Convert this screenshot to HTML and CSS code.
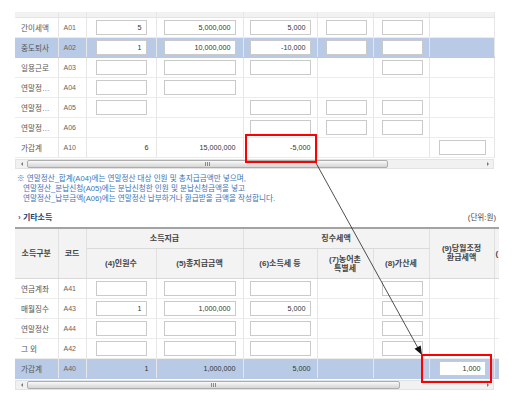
FILE: index.html
```html
<!DOCTYPE html>
<html lang="ko">
<head>
<meta charset="utf-8">
<link rel="stylesheet" href="styles.css">
</head>
<body>
<div class="page">
  <div class="grid top">
    <table>
      <colgroup><col class="w1"><col class="w2"><col class="w3"><col class="w4"><col class="w5"><col class="w6"><col class="w7"><col class="w8"></colgroup>
      <tr class="band"><td></td><td></td><td></td><td></td><td></td><td></td><td></td><td></td></tr>
      <tr><td class="lbl">간이세액</td><td class="code">A01</td><td><div class="box">5</div></td><td><div class="box">5,000,000</div></td><td><div class="box">5,000</div></td><td><div class="box"></div></td><td><div class="box"></div></td><td></td></tr>
      <tr class="hl"><td class="lbl">중도퇴사</td><td class="code">A02</td><td><div class="box">1</div></td><td><div class="box">10,000,000</div></td><td><div class="box">-10,000</div></td><td><div class="box"></div></td><td><div class="box"></div></td><td></td></tr>
      <tr><td class="lbl">일용근로</td><td class="code">A03</td><td><div class="box"></div></td><td><div class="box"></div></td><td><div class="box"></div></td><td></td><td><div class="box"></div></td><td></td></tr>
      <tr><td class="lbl">연말정…</td><td class="code">A04</td><td><div class="box"></div></td><td><div class="box"></div></td><td></td><td></td><td></td><td></td></tr>
      <tr><td class="lbl">연말정…</td><td class="code">A05</td><td><div class="box"></div></td><td></td><td><div class="box"></div></td><td><div class="box"></div></td><td><div class="box"></div></td><td></td></tr>
      <tr><td class="lbl">연말정…</td><td class="code">A06</td><td></td><td></td><td><div class="box"></div></td><td><div class="box"></div></td><td><div class="box"></div></td><td></td></tr>
      <tr><td class="lbl">가감계</td><td class="code">A10</td><td class="num">6</td><td class="num">15,000,000</td><td class="num">-5,000</td><td></td><td></td><td><div class="box"></div></td></tr>
    </table>
    <div class="hscroll">
      <span class="arr left"></span>
      <div class="thumb t1"><span class="grip"></span></div>
      <span class="fill"></span>
      <span class="arr right"></span>
    </div>
  </div>

  <div class="notes">
    <p class="n1">※ 연말정산_합계(A04)에는 연말정산 대상 인원 및 총지급금액만 넣으며,</p>
    <p class="n2">연말정산_분납신청(A05)에는 분납신청한 인원 및 분납신청금액을 넣고</p>
    <p class="n2">연말정산_납부금액(A06)에는 연말정산 납부하거나 환급받을 금액을 작성합니다.</p>
  </div>

  <div class="sec">
    <span class="sec-title"><span class="chev">›</span> 기타소득</span>
    <span class="unit">(단위:원)</span>
  </div>

  <div class="grid bottom">
    <table>
      <colgroup><col class="w1"><col class="w2"><col class="w3"><col class="w4"><col class="w5"><col class="w6"><col class="w7"><col class="w8"><col class="w9"></colgroup>
      <tr class="h1">
        <th rowspan="2">소득구분</th><th rowspan="2">코드</th><th colspan="2">소득지급</th><th colspan="3">징수세액</th><th rowspan="2" class="h9">(9)당월조정<br>환급세액</th><th rowspan="2" class="h10">(</th>
      </tr>
      <tr class="h2">
        <th>(4)인원수</th><th>(5)총지급금액</th><th>(6)소득세 등</th><th>(7)농어촌<br>특별세</th><th>(8)가산세</th>
      </tr>
      <tr><td class="lbl">연금계좌</td><td class="code">A41</td><td><div class="box"></div></td><td><div class="box"></div></td><td><div class="box"></div></td><td></td><td><div class="box"></div></td><td></td><td></td></tr>
      <tr><td class="lbl">매월징수</td><td class="code">A43</td><td><div class="box">1</div></td><td><div class="box">1,000,000</div></td><td><div class="box">5,000</div></td><td></td><td><div class="box"></div></td><td></td><td></td></tr>
      <tr><td class="lbl">연말정산</td><td class="code">A44</td><td><div class="box"></div></td><td><div class="box"></div></td><td><div class="box"></div></td><td></td><td><div class="box"></div></td><td></td><td></td></tr>
      <tr><td class="lbl">그 외</td><td class="code">A42</td><td><div class="box"></div></td><td><div class="box"></div></td><td><div class="box"></div></td><td></td><td><div class="box"></div></td><td></td><td></td></tr>
      <tr class="hl"><td class="lbl">가감계</td><td class="code">A40</td><td class="num">1</td><td class="num">1,000,000</td><td class="num">5,000</td><td></td><td></td><td><div class="box">1,000</div></td><td></td></tr>
    </table>
    <div class="hscroll">
      <span class="arr left"></span>
      <div class="thumb t2"><span class="grip"></span></div>
      <span class="fill"></span>
      <span class="arr right"></span>
    </div>
  </div>
</div>

<svg class="overlay" width="513" height="400" viewBox="0 0 513 400">
  <line x1="316" y1="163" x2="418" y2="348" stroke="#222" stroke-width="0.8"/>
  <polygon points="422,355 414.5,348.8 420.7,345.4" fill="#111"/>
  <rect x="246" y="135" width="70" height="27" fill="none" stroke="#ff0000" stroke-width="2"/>
  <rect x="422" y="355" width="69" height="27" fill="none" stroke="#ff0000" stroke-width="2"/>
</svg>
</body>
</html>
```

FILE: styles.css
```css
* { box-sizing: border-box; }
html, body { margin: 0; padding: 0; background: #fff; }
body {
  width: 513px;
  height: 400px;
  position: relative;
  overflow: hidden;
  font-family: "Liberation Sans", "Noto Sans CJK KR", sans-serif;
  font-size: 7px;
  color: #444;
}
.page { padding: 12px 0 0 15px; }
p { margin: 0; }

.grid { width: 482px; overflow: hidden; }
.bottom.grid { width: 484px; }
.top table { width: 479px; }
.bottom table { width: 530px; }
table { border-collapse: collapse; table-layout: fixed; }
col.w1 { width: 43px; }
col.w2 { width: 28px; }
col.w3 { width: 70px; }
col.w4 { width: 87px; }
col.w5 { width: 74px; }
col.w6 { width: 56px; }
col.w7 { width: 56px; }
col.w8 { width: 65px; }
col.w9 { width: 51px; }

td, th {
  padding: 0;
  height: 20px;
  border-right: 1px solid #e6e6e6;
  border-bottom: 1px solid #ececec;
  vertical-align: middle;
  overflow: hidden;
  white-space: nowrap;
}
tr.band td { height: 5px; background: #f2f2f2; border-bottom: 1px solid #e4e4e4; }
tr.hl td { background: #b8cae6; border-bottom-color: #b8cae6; }

.lbl { padding-left: 6px; font-size: 7.6px; color: #555; }
.code { padding-left: 5px; font-size: 7px; color: #666; }
.num { text-align: right; font-size: 7.2px; color: #333; padding-right: 7px; }
td:nth-child(5).num { padding-right: 6px; }

.box {
  height: 15px;
  border: 1px solid #cacaca;
  background: #fff;
  text-align: right;
  padding-right: 4px;
  line-height: 13px;
  font-size: 7.2px;
  color: #333;
}
td:nth-child(3) .box { margin: 0 9px 0 9px; }
td:nth-child(4) .box { margin: 0 7px 0 7px; }
td:nth-child(5) .box { margin: 0 6px 0 6px; }
td:nth-child(6) .box { margin: 0 6px 0 8px; }
td:nth-child(7) .box { margin: 0 6px 0 8px; }
td:nth-child(8) .box { margin: 0 8px 0 9px; }

.hscroll {
  width: 479px;
  height: 10px;
  margin-top: 1px;
  background: #f1f1f1;
  border: 1px solid #e3e3e3;
  display: flex;
  align-items: center;
}
.arr { width: 11px; height: 8px; display: flex; align-items: center; justify-content: center; }
.arr.left::before {
  content: "";
  border-top: 2px solid transparent;
  border-bottom: 2px solid transparent;
  border-right: 2px solid #777;
}
.arr.right::before {
  content: "";
  border-top: 2px solid transparent;
  border-bottom: 2px solid transparent;
  border-left: 2px solid #777;
}
.thumb {
  height: 8px;
  border: 1px solid #adadad;
  border-radius: 2px;
  background: linear-gradient(#fafafa, #e6e6e6 50%, #d6d6d6);
  display: flex;
  align-items: center;
  justify-content: center;
}
.thumb.t1 { width: 361px; }
.thumb.t2 { width: 373px; }
.fill { flex: 1; }
.grip {
  width: 5px;
  height: 4px;
  background: repeating-linear-gradient(90deg, #8a8a8a 0 1px, transparent 1px 2px);
}

.notes {
  margin-top: 5px;
  color: #3b74b6;
  font-size: 7.6px;
  line-height: 10px;
}
.notes .n1 { padding-left: 2px; }
.notes .n2 { padding-left: 8px; }

.sec {
  width: 482px;
  height: 14px;
  margin-top: 6px;
  display: flex;
  justify-content: space-between;
  align-items: center;
}
.sec-title { padding-left: 3px; font-weight: bold; font-size: 8px; color: #1f3d6e; }
.chev { color: #2c6fb5; font-weight: bold; }
.unit { font-size: 7.6px; color: #444; padding-right: 1px; }

.bottom { margin-top: 3px; border-top: 2px solid #a3a3a3; }
th {
  background: #f3f3f3;
  font-weight: bold;
  font-size: 8px;
  line-height: 9px;
  color: #444;
  text-align: center;
  border-right: 1px solid #e0e0e0;
  border-bottom: 1px solid #d9d9d9;
}
tr.h1 th { height: 20px; }
tr.h2 th { height: 30px; }
th.h10 { text-align: left; padding-left: 1px; }

.overlay { position: absolute; left: 0; top: 0; pointer-events: none; }
```
